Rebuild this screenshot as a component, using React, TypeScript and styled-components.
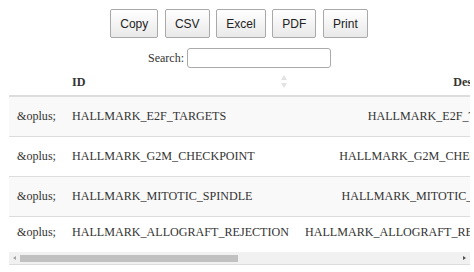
import React from "react";
import styled, { createGlobalStyle } from "styled-components";

const Global = createGlobalStyle`
  html, body { margin: 0; padding: 0; background: #fff; }
  body { font-family: "Liberation Serif", "Times New Roman", serif; color: #333; }
`;

const Page = styled.div`
  padding: 9px 4px 0 9px;
  width: 474px;
  box-sizing: border-box;
  overflow: hidden;
`;

const Toolbar = styled.div`
  display: flex;
  justify-content: center;
  gap: 6.7px;
  margin-left: -1px;
`;

const Btn = styled.button`
  height: 29px;
  padding: 0 9px;
  border: 1px solid #a9a9a9;
  border-radius: 2px;
  background: linear-gradient(to bottom, #ffffff 0%, #e9e9e9 100%);
  font-family: "Liberation Sans", Arial, sans-serif;
  font-size: 12px;
  color: #222;
  cursor: pointer;
`;

const SearchRow = styled.div`
  display: flex;
  justify-content: center;
  align-items: center;
  margin-top: 10px;
  height: 20px;
  font-size: 12px;
`;

const SearchInput = styled.input`
  width: 144px;
  height: 20px;
  box-sizing: border-box;
  margin-left: 3px;
  border: 1px solid #aaa;
  border-radius: 3px;
  padding: 0 4px;
`;

const Viewport = styled.div`
  width: 461px;
  overflow: hidden;
  padding-bottom: 4px;
`;

const Table = styled.table`
  border-collapse: collapse;
  font-size: 12.1px;
  line-height: 15px;
  white-space: nowrap;
`;

const Th = styled.th<{ $right?: boolean }>`
  position: relative;
  padding: 7px ${(p) => (p.$right ? 17 : 8)}px 5px 8px;
  text-align: ${(p) => (p.$right ? "right" : "left")};
  font-weight: bold;
  color: #333;
  border-bottom: 2px solid #ddd;
`;

const SortIcon = styled.svg`
  position: absolute;
  right: 10px;
  top: 7px;
`;

const Tr = styled.tr<{ $striped?: boolean; $pad: number; $first?: boolean }>`
  background: ${(p) => (p.$striped ? "#f9f9f9" : "#fff")};
  & > td {
    padding: ${(p) => p.$pad}px 8px;
    border-top: ${(p) => (p.$first ? "none" : "1px solid #ddd")};
  }
`;

const Td = styled.td<{ $right?: boolean }>`
  text-align: ${(p) => (p.$right ? "right" : "left")};
  color: #333;
`;

const Scrollbar = styled.div`
  display: flex;
  align-items: center;
  width: 461px;
  height: 12px;
  background: #f1f1f1;
  border-bottom: 1px solid #ddd;
`;

const Arrow = styled.div<{ $dir: "left" | "right" }>`
  width: 11px;
  height: 12px;
  display: flex;
  align-items: center;
  justify-content: center;
  &::before {
    content: "";
    width: 0;
    height: 0;
    border-top: 2.5px solid transparent;
    border-bottom: 2.5px solid transparent;
    ${(p) =>
      p.$dir === "left"
        ? "border-right: 3px solid #a3a3a3;"
        : "border-left: 3px solid #505050;"}
  }
`;

const Track = styled.div`
  flex: 1;
  height: 12px;
  display: flex;
  align-items: center;
`;

const Thumb = styled.div`
  height: 7px;
  background: #c1c1c1;
`;

const SortArrows = () => (
  <SortIcon width="6" height="13" viewBox="0 0 6 13">
    <polygon points="3,0 6,5 0,5" fill="#e2e2e2" />
    <polygon points="0,8 6,8 3,13" fill="#e2e2e2" />
  </SortIcon>
);

const rows = [
  { id: "HALLMARK_E2F_TARGETS", pad: 12 },
  { id: "HALLMARK_G2M_CHECKPOINT", pad: 12 },
  { id: "HALLMARK_MITOTIC_SPINDLE", pad: 12 },
  { id: "HALLMARK_ALLOGRAFT_REJECTION", pad: 8 },
];

export default function App() {
  return (
    <>
      <Global />
      <Page>
        <Toolbar>
          {["Copy", "CSV", "Excel", "PDF", "Print"].map((b) => (
            <Btn key={b}>{b}</Btn>
          ))}
        </Toolbar>
        <SearchRow>
          <label>Search:</label>
          <SearchInput type="search" />
        </SearchRow>
        <Viewport>
          <Table>
            <thead>
              <tr>
                <Th></Th>
                <Th>
                  ID
                  <SortArrows />
                </Th>
                <Th $right>
                  Description
                  <SortArrows />
                </Th>
              </tr>
            </thead>
            <tbody>
              {rows.map((r, i) => (
                <Tr key={r.id} $striped={i % 2 === 0} $pad={r.pad} $first={i === 0}>
                  <Td>{"&oplus;"}</Td>
                  <Td>{r.id}</Td>
                  <Td $right>{r.id}</Td>
                </Tr>
              ))}
            </tbody>
          </Table>
        </Viewport>
        <Scrollbar>
          <Arrow $dir="left" />
          <Track>
            <Thumb style={{ width: "218px" }} />
          </Track>
          <Arrow $dir="right" />
        </Scrollbar>
      </Page>
    </>
  );
}
